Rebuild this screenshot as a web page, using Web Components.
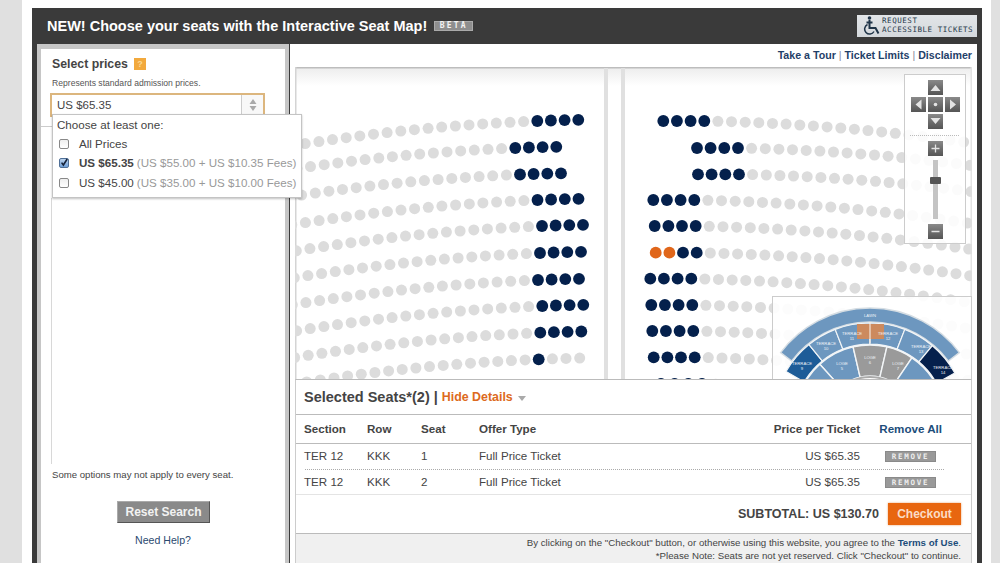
<!DOCTYPE html>
<html lang="en"><head><meta charset="utf-8"><title>Seat Map</title>
<style>html,body{margin:0;padding:0;height:563px;overflow:hidden;background:#e0e0e0;font-family:"Liberation Sans",Arial,sans-serif}</style>
</head><body>
<ts-app></ts-app>
<script>
function el(name,html,init){customElements.define(name,class extends HTMLElement{constructor(){super();this.attachShadow({mode:'open'}).innerHTML=html;if(init)init(this.shadowRoot,this)}})}

el('ts-header',`<style>
:host{display:flex;align-items:center;height:36px;box-sizing:border-box;padding:0 5px 0 15px;color:#fff}
h1{margin:0;font:bold 14.5px/1 "Liberation Sans",sans-serif;white-space:nowrap}
.beta{margin-left:7px;width:39px;height:10px;box-sizing:border-box;border:1px solid #aaa;background:#8e8e8e;color:#f2f2f2;font:bold 8px/8px "DejaVu Sans Mono",monospace;letter-spacing:2.2px;text-align:center}
.req{margin-left:auto;width:120px;height:22px;box-sizing:border-box;background:linear-gradient(#e2e5e8,#d4d8dc);display:flex;align-items:center;padding-left:5px;gap:1px;margin-top:-1px}
.req svg{flex:none}
.t{font:7.5px/8.6px "DejaVu Sans Mono",monospace;letter-spacing:.55px;color:#26384a;white-space:pre}
</style><h1>NEW! Choose your seats with the Interactive Seat Map!</h1><span class="beta">BETA</span>
<div class="req"><svg width="19" height="19" viewBox="0 0 19 19"><circle cx="7.5" cy="2" r="1.8" fill="#1f3448"/><path d="M7.5 4v8h6l3 5.5M4.5 6.5h6" fill="none" stroke="#1f3448" stroke-width="2"/><path d="M5.5 8.5a5 5 0 1 0 6.5 7" fill="none" stroke="#1f3448" stroke-width="1.5"/></svg><div class="t">REQUEST
ACCESSIBLE TICKETS</div></div>`);

el('ts-price-menu',`<style>
:host{position:absolute;left:11px;top:65px;width:250px;height:84px;box-sizing:border-box;background:#fff;border:1px solid #c4c4c4;box-shadow:0 1px 2px rgba(0,0,0,.25);padding:3px 4px 0;color:#444;font:11.6px/14px "Liberation Sans",sans-serif;z-index:3}
.h{height:16px}
.r{display:flex;align-items:center;height:19.5px;white-space:nowrap}
.c{width:10px;height:10px;box-sizing:border-box;border:1px solid #888;border-radius:2px;background:linear-gradient(#eee,#fff);margin:0 10px 0 2px;flex:none;display:block}
.c.on{background:linear-gradient(#bcd3ee,#6f9fd8);border-color:#4f6f96;overflow:visible}
b{font-weight:bold}.g{color:#999;margin-left:3px}
</style><div class="h">Choose at least one:</div>
<div class="r"><span class="c"></span>All Prices</div>
<div class="r"><svg class="c on" viewBox="0 0 10 10"><path d="M2 4.5l2.2 3L9 0" fill="none" stroke="#16233a" stroke-width="2"/></svg><b>US $65.35</b><span class="g">(US $55.00 + US $10.35 Fees)</span></div>
<div class="r"><span class="c"></span><span>US $45.00</span><span class="g">(US $35.00 + US $10.00 Fees)</span></div>`);

el('ts-filter',`<style>
:host{display:flex;flex-direction:column;position:relative;flex:none;width:252px;box-sizing:border-box;border-top:5px solid #c6c6c6;border-left:4px solid #c6c6c6;border-right:4px solid #c6c6c6;background:#fff;padding:8px 0 0 11px;color:#444;margin-right:1px;height:519px}
h2{margin:0;font:bold 12.3px/14px "Liberation Sans",sans-serif;display:flex;align-items:center;gap:6px;height:14px;color:#444}
.q{width:12px;height:12px;background:#f2a93d;color:#fbd893;font:bold 9px/12px "Liberation Sans",sans-serif;text-align:center}
.sub{font:8.6px/10px "Liberation Sans",sans-serif;color:#555;margin-top:7px}
.sel{width:215px;height:24px;box-sizing:border-box;margin:5px 0 0 -2px;border:2px solid #dcb67e;background:#fff;display:flex;align-items:center;padding-left:5px;font:11.5px/14px "Liberation Sans",sans-serif;color:#444;position:relative}
.arr{margin-left:auto;width:21px;height:100%;border-left:1px solid #ccc;background:#f8f8f8;display:flex;align-items:center;justify-content:center}
.rule{position:absolute;left:0;top:77px;width:11px;border-top:1px solid #ccc}
.list{flex:none;height:266px;margin:81px 0 0 -1px;border-left:1px solid #d8d8d8}
.note{font:9.6px/11px "Liberation Sans",sans-serif;color:#444;margin-top:5px;white-space:nowrap}
.btn{align-self:center;margin:21px 0 0 -10px;width:93px;height:22px;box-sizing:border-box;background:#8a8a8a;border:1px solid;border-color:#aaa #555 #555 #aaa;color:#f2f2f2;font:bold 12px/21px "Liberation Sans",sans-serif;text-align:center}
.help{align-self:center;margin:11px 0 0 -11px;font:10.6px/13px "Liberation Sans",sans-serif;color:#2b4a6f}
</style>
<h2>Select prices <span class="q">?</span></h2>
<div class="sub">Represents standard admission prices.</div>
<div class="sel">US $65.35<span class="arr"><svg width="8" height="12" viewBox="0 0 8 12"><path d="M4 0l3.5 5h-7zM4 12l3.5-5h-7z" fill="#aaa"/></svg></span></div>
<div class="rule"></div><ts-price-menu></ts-price-menu>
<div class="list"></div>
<div class="note">Some options may not apply to every seat.</div>
<div class="btn">Reset Search</div>
<div class="help">Need Help?</div>`);

el('ts-links',`<style>
:host{display:flex;justify-content:flex-end;align-items:center;height:23px;font:bold 10.65px/13px "Liberation Sans",sans-serif;color:#1f4068;padding-right:0}
i{font-style:normal;font-weight:normal;color:#889;margin:0 3px}
</style>Take a Tour<i>|</i>Ticket Limits<i>|</i>Disclaimer`);

el('ts-zoom',`<style>
:host{position:absolute;left:609px;top:7px;width:62px;height:170px;box-sizing:border-box;background:rgba(255,255,255,.88);border:1px solid #ccc;display:block}
svg{display:block}
</style><svg width="60" height="168" viewBox="905 75 60 168">
<defs><linearGradient id="b" x1="0" y1="0" x2="0" y2="1"><stop offset="0" stop-color="#8a8a8a"/><stop offset=".5" stop-color="#6e6e6e"/><stop offset="1" stop-color="#555"/></linearGradient></defs>
<g fill="url(#b)"><rect x="928" y="80" width="15" height="15"/><rect x="911" y="97" width="15" height="15"/><rect x="928" y="97" width="15" height="15"/><rect x="945" y="97" width="15" height="15"/><rect x="928" y="114" width="15" height="15"/><rect x="928" y="141" width="15" height="15"/><rect x="928" y="224" width="15" height="15"/></g>
<g fill="#e4e4e4"><path d="M930.5 91l5-6 5 6zM921.5 99.5v10l-6-5zM950 99.5v10l6-5zM930.5 118l5 6 5-6z"/><circle cx="935.5" cy="104.5" r="1.8"/></g>
<path d="M935.5 144.5v8M931.5 148.5h8M931.5 231.5h8" stroke="#e4e4e4" stroke-width="1.3"/>
<path d="M910 135.5h50" stroke="#bbb" stroke-dasharray="1 1"/>
<rect x="933" y="160" width="5" height="59" fill="#c4c4c4"/>
<rect x="930" y="177" width="11" height="7" rx="1" fill="#555"/></svg>`);

el('ts-minimap',`<style>
:host{position:absolute;left:477px;top:229px;width:200px;height:83px;box-sizing:border-box;background:rgba(255,255,255,.9);border:1px solid #ccc;border-bottom:0;overflow:hidden;display:block}
svg{display:block}text{font:4.2px "Liberation Sans",sans-serif;fill:#eef3f8;text-anchor:middle}
</style><svg width="198" height="82" viewBox="773 297 198 82"></svg>`,root=>{
 const cx=870,cy=420,P=(r,a)=>{const t=a*Math.PI/180;return[(cx+r*Math.sin(t)).toFixed(1),(cy-r*Math.cos(t)).toFixed(1)]};
 const arc=(r1,r2,a,b,f,s='#e8eef3',w=1.2)=>{const A=P(r2,a),B=P(r2,b),C=P(r1,b),D=P(r1,a);return `<path d="M${A}A${r2} ${r2} 0 0 1 ${B}L${C}A${r1} ${r1} 0 0 0 ${D}Z" fill="${f}" stroke="${s}" stroke-width="${w}"/>`};
 const T='#6d97bf',G='#9a9a9a';let h='';
 h+=arc(98,112,-53,53,T,'#d5dde3',1.4);
 [[-60,-39,'#1d5c98'],[-39,-21,T],[-21,0,T],[0,21,T],[21,40,T],[40,61,'#05204c']].forEach(s=>h+=arc(76,97,s[0],s[1],s[2],'#f2f5f7',1.2));
 [[-42,-13,T],[-13,13,G],[13,34,G],[34,60,T],[-60,-42,T]].forEach(s=>h+=arc(44,75,s[0],s[1],s[2],'#f2f5f7',1.4));
 h+=`<circle cx="870" cy="420" r="43" fill="#fff" stroke="#aaa" stroke-width="2"/>`;
 h+=`<rect x="857" y="324" width="27" height="15" fill="#cc8a5e"/><path d="M870 322v21" stroke="#f3e6dc" stroke-width="1.2"/>`;
 [['LAWN',870,317],['TERRACE',826,345],['10',826,350],['TERRACE',852,335],['11',852,340],['TERRACE',888,335],['12',888,340],['TERRACE',921,348],['13',921,353],['TERRACE',802,365],['9',802,370],['TERRACE',943,369],['14',943,374],['LOGE',842,365],['5',842,370],['LOGE',870,359],['6',870,364],['LOGE',898,365],['7',898,370]].forEach(t=>h+=`<text x="${t[1]}" y="${t[2]}">${t[0]}</text>`);
 root.querySelector('svg').innerHTML=h;
});

el('ts-map',`<style>
:host{display:block;position:relative;height:312px;box-sizing:border-box;overflow:hidden;background:#fff}
svg{display:block}
</style><svg width="677" height="312" viewBox="295 67 677 312"></svg><ts-zoom></ts-zoom><ts-minimap></ts-minimap>`,root=>{
 const NAVY='#04204c',GREY='#dcdcdc',OR='#e0661a';let h=`<defs><linearGradient id="f" x1="0" y1="0" x2="0" y2="1"><stop offset="0" stop-color="#ededed"/><stop offset="1" stop-color="#fff"/></linearGradient></defs><rect x="295" y="68" width="677" height="18" fill="url(#f)"/><rect x="295" y="67" width="677" height="1.5" fill="#bdbdbd"/><rect x="295" y="67" width="1.5" height="312" fill="#d4d4d4"/><rect x="970.5" y="67" width="1.5" height="312" fill="#e2e2e2"/><rect x="604" y="68" width="4" height="311" fill="#e0e0e0"/><rect x="621" y="68" width="4" height="311" fill="#e0e0e0"/>`;
 const c=(x,y,col)=>`<circle cx="${x.toFixed(1)}" cy="${y.toFixed(1)}" r="${col===GREY?5.5:5.9}" fill="${col}"/>`;
 const step=13.65;
 [[537.3,121],[515.3,148],[520,174.5],[537.5,200],[542,226],[540,253],[538,280],[542.3,306],[540.3,332.7],[538.7,359.3]].forEach((r,i)=>{
  for(let k=-3;k<=20;k++){const n=k,x=r[0]-n*step,y=r[1]+.55*n+.046*n*n;if(x<285)continue;
   const col=n<=0?(i===9&&n<0?GREY:NAVY):GREY;h+=c(x,y,col)}
 });
 [[663.3,121],[697,148],[698,174.3],[653.3,200],[654.7,226],[655.7,252.7],[650.3,278.7],[651.3,305],[652.3,331],[653.7,357.3],[661,384]].forEach((r,i)=>{
  for(let k=0;k<=24;k++){const n=k-3,x=r[0]+k*step,y=r[1]+.25*Math.max(n,0)+.045*Math.max(n,0)**2;if(x>985)continue;
   const col=k<4?((i===5&&k<2)?OR:NAVY):GREY;h+=c(x,y,col)}
 });
 root.querySelector('svg').innerHTML=h;
});

el('ts-seat-row',`<style>
:host{display:grid;grid-template-columns:63px 54px 58px 1fr 87px 84px;align-items:center;height:25px;padding-left:8px;font:11.6px/14px "Liberation Sans",sans-serif;color:#444;box-sizing:border-box;padding-right:27px}
.p{grid-column:5;text-align:right;white-space:nowrap;margin-left:-20px}
.rm{justify-self:end;width:51px;height:11px;box-sizing:border-box;background:#999;border:1px solid #8a8a8a;color:#eee;font:bold 7.5px/9px "DejaVu Sans Mono",monospace;letter-spacing:1.7px;text-align:center;margin-right:8px}
</style><span><slot name="s"></slot></span><span><slot name="r"></slot></span><span><slot name="n"></slot></span><span>Full Price Ticket</span><span class="p">US $65.35</span><span class="rm">REMOVE</span>`);

el('ts-selected',`<style>
:host{display:block;box-sizing:border-box;border-top:1px solid #bbb;border-left:1px solid #ccc;border-right:1px solid #ccc;background:#fff;height:184px;color:#444}
.t{height:35px;box-sizing:border-box;border-bottom:1px solid #bbb;display:flex;align-items:center;padding-left:8px;font:bold 14.5px/16px "Liberation Sans",sans-serif}
.o{color:#dd6a20;font-size:12.4px;margin-left:4px}
.tri{width:0;height:0;border:4px solid transparent;border-top:5px solid #aaa;border-bottom:0;margin:2px 0 0 5px}
.h{display:grid;grid-template-columns:63px 54px 58px 1fr 87px 84px;align-items:center;height:29px;box-sizing:border-box;border-bottom:1px solid #bbb;padding:0 27px 0 8px;font:bold 11.6px/14px "Liberation Sans",sans-serif;white-space:nowrap}
.h .p{grid-column:5;text-align:right;margin-left:-20px}
.ra{color:#1d4d7a;justify-self:end;margin-right:2px}
.d{border-top:1px dotted #aaa;margin:0 27px 0 9px}
.rows{height:51px;box-sizing:border-box;border-bottom:1px solid #e4e4e4}
.sub{height:39px;box-sizing:border-box;display:flex;align-items:center;justify-content:flex-end;padding-right:10px;font:bold 12.55px/15px "Liberation Sans",sans-serif;gap:9px;border-bottom:1px solid #bbb}
.co{width:73px;height:22px;background:#e8660f;box-shadow:0 0 2px #e9a26f;color:#fbdcc6;font:bold 12px/22px "Liberation Sans",sans-serif;text-align:center}
.f{background:#f0f0f0;height:30px;box-sizing:border-box;padding:2px 10px 0 0;text-align:right;font:9.7px/13px "Liberation Sans",sans-serif;color:#444;white-space:nowrap}
.f b{color:#1d4d7a}
</style>
<div class="t">Selected Seats*(2)&nbsp;|<span class="o">Hide Details</span><span class="tri"></span></div>
<div class="h"><span>Section</span><span>Row</span><span>Seat</span><span>Offer Type</span><span class="p">Price per Ticket</span><span class="ra">Remove All</span></div>
<div class="rows"><ts-seat-row style="padding-bottom:1px"><span slot="s">TER 12</span><span slot="r">KKK</span><span slot="n">1</span></ts-seat-row><div class="d"></div><ts-seat-row style="height:24px"><span slot="s">TER 12</span><span slot="r">KKK</span><span slot="n">2</span></ts-seat-row></div>
<div class="sub">SUBTOTAL: US $130.70<span class="co">Checkout</span></div>
<div class="f">By clicking on the "Checkout" button, or otherwise using this website, you agree to the <b>Terms of Use</b>.<br>*Please Note: Seats are not yet reserved. Click "Checkout" to continue.</div>`);

el('ts-app',`<style>
:host{display:block;height:563px;overflow:hidden;background:#e0e0e0}
.col{width:969px;margin-left:22px;height:563px;box-sizing:border-box;background:#fff;padding:8px 9px 0 10px}
.frame{background:#3a3a3a;height:555px;display:flex;flex-direction:column}
.body{flex:1;display:flex;padding:0 5px;min-height:0}
.main{flex:1;background:#fff;padding:0 5px;min-width:0}
</style><div class="col"><div class="frame"><ts-header></ts-header>
<div class="body"><ts-filter></ts-filter><div class="main"><ts-links></ts-links><ts-map></ts-map><ts-selected></ts-selected></div></div></div></div>`);
</script></body></html>
